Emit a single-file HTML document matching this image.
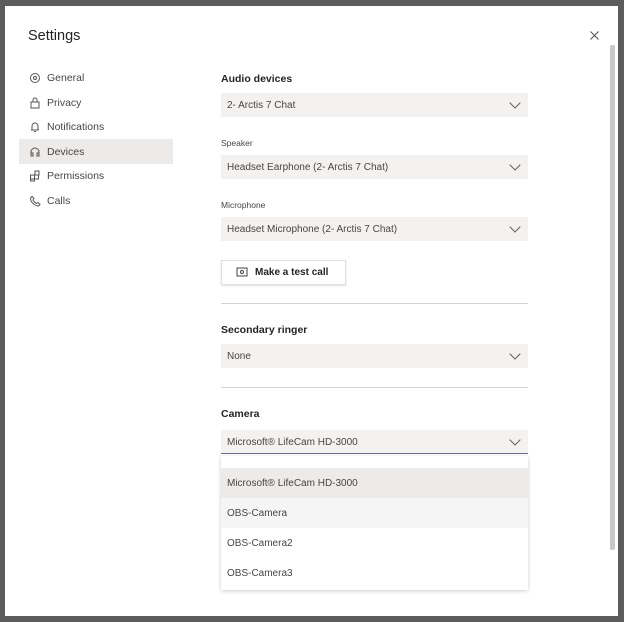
<!DOCTYPE html>
<html><head><style>
*{margin:0;padding:0;box-sizing:border-box}
body{width:624px;height:622px;background:#5c5c5c;font-family:"Liberation Sans",sans-serif;color:#252423;position:relative;overflow:hidden}
.dlg{position:absolute;left:5px;top:6px;width:613px;height:610px;background:#fff}
.a{position:absolute}
.title{left:28px;top:28px;font-size:14.5px;color:#252423}
.nav{left:19px;height:25px;width:154px;font-size:10.5px;color:#484644;display:flex;align-items:center;padding-left:10px}
.nav svg{margin-right:6px}
.sel{background:#edebe9}
.h{font-size:10.5px;font-weight:bold;left:221px}
.lbl{font-size:8.5px;left:221px;color:#484644}
.dd{left:221px;width:307px;height:24px;background:#f3f2f1;font-size:10px;color:#484644;padding:7px 6px}
.dd::after{content:"";position:absolute;right:9px;top:6px;width:7px;height:7px;border-right:1px solid #605e5c;border-bottom:1px solid #605e5c;transform:rotate(45deg)}
.hr{left:221px;width:307px;height:1px;background:#d6d4d2}
.btn{left:221px;top:260px;width:125px;height:25px;border:1px solid #e1dfdd;box-shadow:0 1px 2px rgba(0,0,0,.12);font-size:10px;font-weight:bold;color:#252423;display:flex;align-items:center;padding-left:14px}
.list{left:221px;top:456px;width:307px;height:134px;box-shadow:0 1px 4px rgba(0,0,0,.2);background:#fff;overflow:hidden}
.it{height:30px;font-size:10px;color:#484644;padding:10px 6px}
</style></head><body>
<div class="dlg"></div>
<div class="a title">Settings</div>
<svg class="a" style="left:590px;top:31px" width="9" height="9" viewBox="0 0 9 9" stroke="#555" stroke-width="1.1"><path d="M0.5 0.5l8 8M8.5 0.5l-8 8"/></svg>
<div class="a nav" style="top:65px"><svg width="12" height="12" viewBox="0 0 12 12" fill="none" stroke="#555"><circle cx="6" cy="6" r="4.5"/><circle cx="6" cy="6" r="1.5"/></svg>General</div>
<div class="a nav" style="top:90px"><svg width="12" height="12" viewBox="0 0 12 12" fill="none" stroke="#555"><rect x="2" y="5" width="8" height="6"/><path d="M4 5V3a2 2 0 0 1 4 0v2"/></svg>Privacy</div>
<div class="a nav" style="top:114px"><svg width="12" height="12" viewBox="0 0 12 12" fill="none" stroke="#555"><path d="M3 9V5a3 3 0 0 1 6 0v4H2h8M5 10.5h2"/></svg>Notifications</div>
<div class="a nav sel" style="top:139px"><svg width="12" height="12" viewBox="0 0 12 12" fill="none" stroke="#555"><path d="M2 8V6a4 4 0 0 1 8 0v2"/><rect x="2" y="7" width="2" height="3"/><rect x="8" y="7" width="2" height="3"/></svg>Devices</div>
<div class="a nav" style="top:163px"><svg width="12" height="12" viewBox="0 0 12 12" fill="none" stroke="#555"><rect x="1.5" y="5" width="4" height="4"/><rect x="5.5" y="5" width="4" height="4"/><rect x="1.5" y="9" width="4" height="2"/><rect x="6" y="1" width="4" height="4"/></svg>Permissions</div>
<div class="a nav" style="top:188px"><svg width="12" height="12" viewBox="0 0 12 12" fill="none" stroke="#555"><path d="M3 1.5l2 2-1 1.5c.8 1.6 1.8 2.6 3.4 3.4L9 7.5l2 2-1.5 1.5C5 10.5 1.5 7 1.5 3z"/></svg>Calls</div>
<div class="a h" style="top:73px">Audio devices</div>
<div class="a dd" style="top:93px">2- Arctis 7 Chat</div>
<div class="a lbl" style="top:138px">Speaker</div>
<div class="a dd" style="top:155px">Headset Earphone (2- Arctis 7 Chat)</div>
<div class="a lbl" style="top:200px">Microphone</div>
<div class="a dd" style="top:217px">Headset Microphone (2- Arctis 7 Chat)</div>
<div class="a btn"><svg width="12" height="11" viewBox="0 0 12 11" fill="none" stroke="#444" style="margin-right:7px"><rect x="1" y="1" width="10" height="8"/><circle cx="6" cy="5" r="1.5"/></svg>Make a test call</div>
<div class="a hr" style="top:303px"></div>
<div class="a h" style="top:324px">Secondary ringer</div>
<div class="a dd" style="top:344px">None</div>
<div class="a hr" style="top:387px"></div>
<div class="a h" style="top:408px">Camera</div>
<div class="a dd" style="top:430px;border-bottom:1.5px solid #6b6a8f">Microsoft® LifeCam HD-3000</div>
<div class="a list"><div style="height:12px"></div>
<div class="it" style="background:#edebe9">Microsoft® LifeCam HD-3000</div>
<div class="it" style="background:#f5f5f5">OBS-Camera</div>
<div class="it">OBS-Camera2</div>
<div class="it">OBS-Camera3</div>
</div>
<div class="a" style="left:610px;top:45px;width:5px;height:505px;background:#c8c8c8;border-radius:2px"></div>
</body></html>
